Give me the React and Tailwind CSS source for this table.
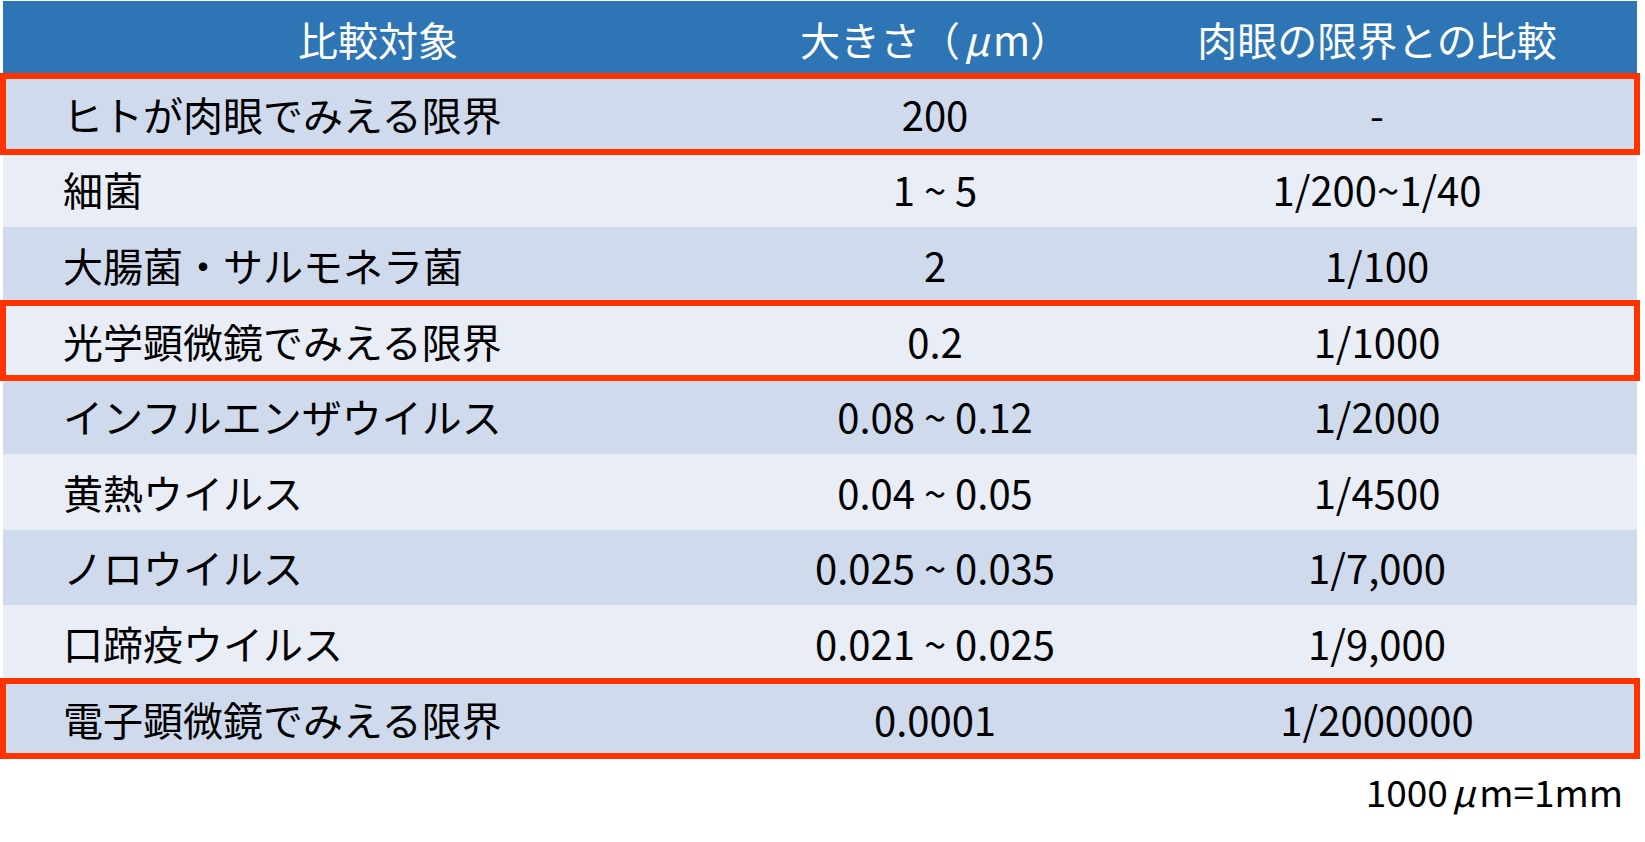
import React from "react";

const rows = [
  { name: "ヒトが肉眼でみえる限界", size: "200", ratio: "-", mark: true },
  { name: "細菌", size: "1 ~ 5", ratio: "1/200~1/40" },
  { name: "大腸菌・サルモネラ菌", size: "2", ratio: "1/100" },
  { name: "光学顕微鏡でみえる限界", size: "0.2", ratio: "1/1000", mark: true },
  { name: "インフルエンザウイルス", size: "0.08 ~ 0.12", ratio: "1/2000" },
  { name: "黄熱ウイルス", size: "0.04 ~ 0.05", ratio: "1/4500" },
  { name: "ノロウイルス", size: "0.025 ~ 0.035", ratio: "1/7,000" },
  { name: "口蹄疫ウイルス", size: "0.021 ~ 0.025", ratio: "1/9,000" },
  { name: "電子顕微鏡でみえる限界", size: "0.0001", ratio: "1/2000000", mark: true },
];

const font = { fontFamily: '"Noto Sans CJK JP", "Noto Sans", sans-serif' };

const App = () => {
  return (
    <div className="w-[1645px] h-[842px] bg-white overflow-hidden" style={font}>
      <div className="ml-[3px] w-[1634px] pt-[1px]">
        {/* header */}
        <div className="flex h-[75px] bg-[#2E75B6] text-white text-[40px] leading-none">
          <div className="w-[750px] flex items-center justify-center">比較対象</div>
          <div className="w-[364px] flex items-center justify-center">
            大きさ（<span className="italic px-[4px]">μ</span>m）
          </div>
          <div className="flex-1 flex items-center justify-center">肉眼の限界との比較</div>
        </div>

        {rows.map((r, i) => (
          <div
            key={r.name}
            className={`relative flex h-[75.6px] text-[40px] leading-none text-black ${
              i % 2 === 0 ? "bg-[#CFDAEC]" : "bg-[#E9EDF6]"
            }`}
          >
            <div className="w-[750px] flex items-center pl-[60px]">{r.name}</div>
            <div className="w-[364px] flex items-center justify-center">{r.size}</div>
            <div className="flex-1 flex items-center justify-center">{r.ratio}</div>
            {r.mark && (
              <div className="absolute -inset-[3px] z-10 border-[6px] border-[#FF3300] pointer-events-none" />
            )}
          </div>
        ))}
      </div>

      <div className="flex justify-end pr-[22px] mt-[17px] text-[37px] leading-none text-black">
        1000<span className="italic px-[4px]">μ</span>m=1mm
      </div>
    </div>
  );
};

export default App;
